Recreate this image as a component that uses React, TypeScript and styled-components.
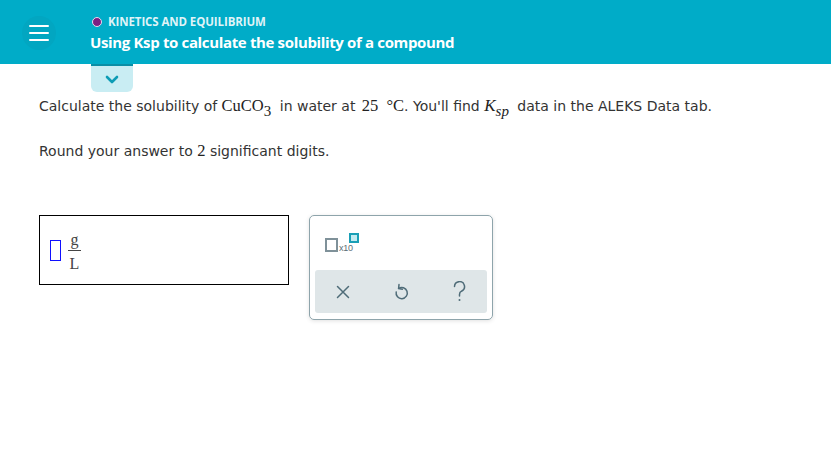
import React from "react";
import styled, { createGlobalStyle } from "styled-components";

const Global = createGlobalStyle`
  html, body { margin: 0; padding: 0; background: #fff; }
  body { width: 831px; height: 456px; overflow: hidden; font-family: "DejaVu Sans", sans-serif; }
`;

const Page = styled.div`
  display: flex;
  flex-direction: column;
  width: 831px;
  height: 456px;
`;

const Header = styled.header`
  display: flex;
  align-items: center;
  height: 64px;
  background: #00acc8;
  padding-left: 22px;
  box-sizing: border-box;
`;

const MenuButton = styled.div`
  width: 34px;
  height: 34px;
  border-radius: 50%;
  background: #02a6c1;
  display: flex;
  flex-direction: column;
  align-items: center;
  justify-content: center;
  gap: 5px;
  margin-top: 2px;
`;

const MenuLine = styled.span`
  display: block;
  width: 20px;
  height: 2px;
  background: #fff;
  border-radius: 1px;
`;

const Titles = styled.div`
  display: flex;
  flex-direction: column;
  margin-left: 34px;
  margin-top: 2px;
`;

const Topic = styled.div`
  display: flex;
  align-items: center;
  gap: 6px;
  margin-left: 2px;
  font-family: "Open Sans", Lato, sans-serif;
  font-weight: 700;
  font-size: 11.5px;
  letter-spacing: -0.1px;
  color: #dff3f7;
  line-height: 14px;
`;

const Dot = styled.span`
  width: 10px;
  height: 10px;
  border-radius: 50%;
  background: #7b1f82;
  border: 1px solid #e8d8ee;
  box-sizing: border-box;
`;

const Title = styled.div`
  font-family: "Open Sans", Lato, sans-serif;
  font-weight: 700;
  font-size: 15px;
  letter-spacing: -0.35px;
  color: #fff;
  line-height: 20px;
  margin-top: 3px;
`;

const TabRow = styled.div`
  padding-left: 91px;
  height: 28px;
`;

const Tab = styled.div`
  width: 42px;
  height: 28px;
  background: #c9edf3;
  border-top: 2px solid #0a8ea6;
  border-radius: 0 0 6px 6px;
  box-sizing: border-box;
  display: flex;
  align-items: center;
  justify-content: center;
`;

const Content = styled.main`
  padding: 0 0 0 39px;
  color: #333;
  font-family: "DejaVu Sans", sans-serif;
  font-size: 14px;
`;

const Line = styled.p<{ $top: number }>`
  margin: ${(p) => p.$top}px 0 0;
  line-height: 20px;
  white-space: nowrap;
`;

const M = styled.span<{ $wide?: boolean }>`
  font-family: "Liberation Serif", "Times New Roman", serif;
  font-size: 16.5px;
  color: #222;
  word-spacing: ${(p) => (p.$wide ? "4px" : "0")};
  margin-left: ${(p) => (p.$wide ? "2px" : "0")};
`;

const Sub = styled.sub<{ $italic?: boolean }>`
  font-family: "Liberation Serif", serif;
  font-size: 15px;
  font-style: ${(p) => (p.$italic ? "italic" : "normal")};
  vertical-align: -5px;
  line-height: 0;
  color: #222;
  margin-right: 4px;
`;

const Ital = styled.span`
  font-family: "Liberation Serif", serif;
  font-style: italic;
  font-size: 17px;
  color: #222;
`;

const Work = styled.div`
  display: flex;
  align-items: flex-start;
  gap: 20px;
  margin-top: 54px;
`;

const AnswerBox = styled.div`
  width: 250px;
  height: 70px;
  border: 1px solid #000;
  box-sizing: border-box;
  display: flex;
  align-items: center;
  padding-left: 10px;
  gap: 7px;
`;

const Cursor = styled.span`
  width: 11px;
  height: 21px;
  border: 1px solid #1010ff;
  box-sizing: border-box;
`;

const Fraction = styled.div`
  display: flex;
  flex-direction: column;
  align-items: center;
  font-family: "Liberation Serif", serif;
  font-size: 16px;
  color: #444;
  width: 13px;
  line-height: 16px;
  margin-top: 3px;
`;

const Bar = styled.span`
  align-self: stretch;
  height: 1px;
  background: #444;
  margin: 2px 0 5px;
`;

const Tools = styled.div`
  width: 184px;
  height: 105px;
  border: 1px solid #8ea4ab;
  border-radius: 5px;
  box-sizing: border-box;
  box-shadow: 0 1px 4px rgba(0, 0, 0, 0.12);
  padding: 5px;
  display: flex;
  flex-direction: column;
`;

const ToolTop = styled.div`
  height: 49px;
  display: flex;
  align-items: flex-start;
  padding: 10px 0 0 10px;
  box-sizing: border-box;
`;

const SciIcon = styled.div`
  position: relative;
  width: 40px;
  height: 24px;
`;

const BaseBox = styled.span`
  position: absolute;
  left: 0;
  top: 7px;
  width: 13px;
  height: 14px;
  border: 2px solid #7f9199;
  box-sizing: border-box;
`;

const ExpBox = styled.span`
  position: absolute;
  left: 24px;
  top: 2px;
  width: 10px;
  height: 10px;
  border: 2px solid #1a9fb6;
  background: #c3ebf1;
  box-sizing: border-box;
`;

const Times = styled.span`
  position: absolute;
  left: 14px;
  top: 12px;
  font-family: "Liberation Sans", Arial, sans-serif;
  font-size: 9px;
  color: #5b6e75;
  letter-spacing: -0.3px;
`;

const ToolBar = styled.div`
  height: 43px;
  background: #dfe6e8;
  border-radius: 3px;
  display: flex;
  align-items: center;
  justify-content: space-between;
  padding: 0 18px;
`;

const IconBtn = styled.span`
  width: 20px;
  height: 22px;
  display: flex;
  align-items: center;
  justify-content: center;
`;

const stroke = "#4f6c78";

export default function App() {
  return (
    <Page>
      <Global />
      <Header>
        <MenuButton>
          <MenuLine />
          <MenuLine />
          <MenuLine />
        </MenuButton>
        <Titles>
          <Topic>
            <Dot />
            KINETICS AND EQUILIBRIUM
          </Topic>
          <Title>Using Ksp to calculate the solubility of a compound</Title>
        </Titles>
      </Header>
      <TabRow>
        <Tab>
          <svg width="14" height="9" viewBox="0 0 14 9">
            <path d="M2 2 L7 7 L12 2" fill="none" stroke="#0d9cb5" strokeWidth="2.6" strokeLinecap="round" strokeLinejoin="round" />
          </svg>
        </Tab>
      </TabRow>
      <Content>
        <Line $top={4}>
          Calculate the solubility of <M>CuCO</M>
          <Sub>3</Sub> in water at <M $wide>25 °C</M>. You'll find <Ital>K</Ital>
          <Sub $italic>sp</Sub> data in the ALEKS Data tab.
        </Line>
        <Line $top={25}>
          Round your answer to <M>2</M> significant digits.
        </Line>
        <Work>
          <AnswerBox>
            <Cursor />
            <Fraction>
              <span>g</span>
              <Bar />
              <span>L</span>
            </Fraction>
          </AnswerBox>
          <Tools>
            <ToolTop>
              <SciIcon>
                <BaseBox />
                <Times>x10</Times>
                <ExpBox />
              </SciIcon>
            </ToolTop>
            <ToolBar>
              <IconBtn>
                <svg width="14" height="14" viewBox="0 0 14 14">
                  <path d="M1.5 1.5 L12.5 12.5 M12.5 1.5 L1.5 12.5" stroke={stroke} strokeWidth="1.5" strokeLinecap="round" />
                </svg>
              </IconBtn>
              <IconBtn>
                <svg width="15" height="18" viewBox="0 0 15 18">
                  <path d="M4.6 5.4 A5.6 5.6 0 1 1 2.2 9" fill="none" stroke={stroke} strokeWidth="1.5" strokeLinecap="round" />
                  <path d="M5 1.6 L4.6 5.6 L8.4 6.2" fill="none" stroke={stroke} strokeWidth="1.5" strokeLinecap="round" strokeLinejoin="round" />
                </svg>
              </IconBtn>
              <IconBtn>
                <svg width="13" height="21" viewBox="0 0 13 21">
                  <path d="M1.5 5.5 A5 5 0 1 1 8.5 10.2 Q6.5 11.2 6.5 13.5 L6.5 15" fill="none" stroke={stroke} strokeWidth="1.5" strokeLinecap="round" />
                  <circle cx="6.5" cy="19" r="1" fill={stroke} />
                </svg>
              </IconBtn>
            </ToolBar>
          </Tools>
        </Work>
      </Content>
    </Page>
  );
}
